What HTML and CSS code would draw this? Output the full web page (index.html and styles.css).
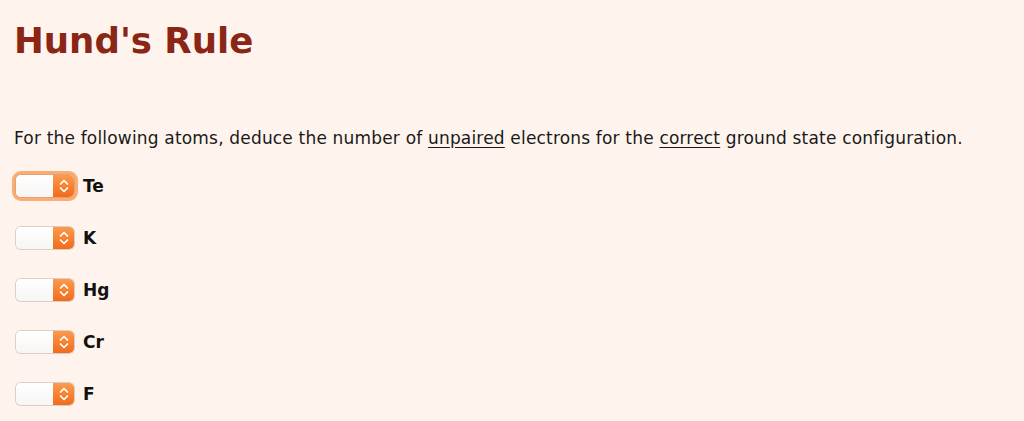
FILE: index.html
```html
<!DOCTYPE html>
<html>
<head>
<meta charset="utf-8">
<link rel="stylesheet" href="styles.css">
</head>
<body>
<h1 class="title">Hund's Rule</h1>
<p class="prompt">For the following atoms, deduce the number of <u>unpaired</u> electrons for the <u>correct</u> ground state configuration.</p>
<div class="rows">
  <div class="row"><span class="sel focus"><span class="field"></span><span class="btn"><svg viewBox="0 0 10 16" width="10" height="16"><path d="M1.5 6 L5 2.5 L8.5 6 M1.5 10 L5 13.5 L8.5 10" fill="none" stroke="#fff" stroke-width="1.7" stroke-linecap="round" stroke-linejoin="round"/></svg></span></span><span class="lbl">Te</span></div>
  <div class="row"><span class="sel"><span class="field"></span><span class="btn"><svg viewBox="0 0 10 16" width="10" height="16"><path d="M1.5 6 L5 2.5 L8.5 6 M1.5 10 L5 13.5 L8.5 10" fill="none" stroke="#fff" stroke-width="1.7" stroke-linecap="round" stroke-linejoin="round"/></svg></span></span><span class="lbl">K</span></div>
  <div class="row"><span class="sel"><span class="field"></span><span class="btn"><svg viewBox="0 0 10 16" width="10" height="16"><path d="M1.5 6 L5 2.5 L8.5 6 M1.5 10 L5 13.5 L8.5 10" fill="none" stroke="#fff" stroke-width="1.7" stroke-linecap="round" stroke-linejoin="round"/></svg></span></span><span class="lbl">Hg</span></div>
  <div class="row"><span class="sel"><span class="field"></span><span class="btn"><svg viewBox="0 0 10 16" width="10" height="16"><path d="M1.5 6 L5 2.5 L8.5 6 M1.5 10 L5 13.5 L8.5 10" fill="none" stroke="#fff" stroke-width="1.7" stroke-linecap="round" stroke-linejoin="round"/></svg></span></span><span class="lbl">Cr</span></div>
  <div class="row"><span class="sel"><span class="field"></span><span class="btn"><svg viewBox="0 0 10 16" width="10" height="16"><path d="M1.5 6 L5 2.5 L8.5 6 M1.5 10 L5 13.5 L8.5 10" fill="none" stroke="#fff" stroke-width="1.7" stroke-linecap="round" stroke-linejoin="round"/></svg></span></span><span class="lbl">F</span></div>
</div>
</body>
</html>
```
FILE: styles.css
```css
html, body {
  margin: 0;
  padding: 0;
  background: #fef4ed;
}
body {
  padding: 0 14px;
  font-family: "DejaVu Sans", Verdana, sans-serif;
  color: #1a1a1a;
  height: 421px;
  overflow: hidden;
}
.title {
  margin: 0;
  padding-top: 19px;
  font-size: 35.6px;
  line-height: 44px;
  font-weight: bold;
  color: #8a2616;
}
.prompt {
  margin: 0;
  padding-top: 65px;
  font-size: 17px;
  line-height: 21px;
  letter-spacing: 0.18px;
}
.prompt u {
  text-underline-offset: 3px;
}
.rows {
  display: flex;
  flex-direction: column;
  gap: 30px;
  padding-top: 26px;
}
.row {
  display: flex;
  align-items: center;
  height: 22px;
  padding-left: 2px;
}
.sel {
  display: flex;
  width: 58px;
  height: 22px;
  border-radius: 5px;
  box-shadow: 0 0 0 1px #d8cfc8;
  overflow: hidden;
  background: #fff;
}
.sel.focus {
  box-shadow: 0 0 0 1px #e9a070, 0 0 0 4px #f7ad73;
}
.field {
  flex: 1;
  background: linear-gradient(#ffffff, #f8f6f4);
}
.btn {
  width: 21px;
  display: flex;
  align-items: center;
  justify-content: center;
  background: linear-gradient(#fb9b4c, #f26a1b);
}
.lbl {
  margin-left: 9px;
  font-weight: bold;
  font-size: 17px;
  color: #111;
}
```
